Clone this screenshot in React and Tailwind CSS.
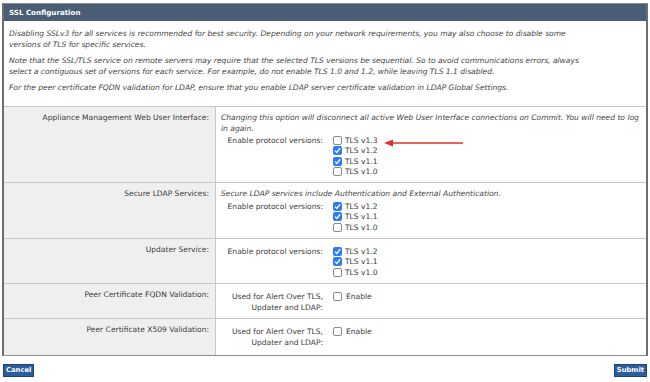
import React from 'react';

function Box({ checked }) {
  return checked ? (
    <span className="inline-flex w-[9px] h-[9px] rounded-[2px] bg-[#2d7cf6] items-center justify-center shrink-0">
      <svg width="7" height="7" viewBox="0 0 10 10">
        <path d="M1.5 5.2 L4 7.8 L8.8 1.8" fill="none" stroke="white" strokeWidth="1.8" />
      </svg>
    </span>
  ) : (
    <span className="inline-block w-[9px] h-[9px] rounded-[2px] border border-[#8a8a8a] bg-white shrink-0" />
  );
}

function Versions({ items }) {
  return (
    <div className="flex flex-col">
      {items.map(([label, on]) => (
        <div key={label} className="flex items-center gap-[3px] h-[10.5px]">
          <Box checked={on} />
          <span>{label}</span>
        </div>
      ))}
    </div>
  );
}

function Row({ label, children, h, last }) {
  return (
    <div className={`grid grid-cols-[212px_1fr] ${last ? '' : 'border-b border-[#c8c8c8]'}`} style={{ height: h }}>
      <div className="bg-[#efefef] border-r border-[#c8c8c8] text-right pr-[6px] pt-[5px] text-[#3a3a3a]">{label}</div>
      <div className="pl-[5px] pt-[5px] text-[#3a3a3a]">{children}</div>
    </div>
  );
}

export default function App() {
  return (
    <div className="w-[650px] h-[382px] bg-white font-['DejaVu_Sans',sans-serif] text-[7.55px] leading-[11px] relative">
      <div className="mx-[2px] mt-[3px] border border-[#8d8d8d] border-x-2 border-x-[#6e6e6e]">
        <div className="bg-[#4a5d76] text-white font-bold text-[7.1px] h-[17px] flex items-center pl-[5px]">SSL Configuration</div>
        <div className="italic text-[#444] pl-[5px] pr-[52px] pt-[7px] pb-[13px] border-b border-[#c8c8c8] flex flex-col gap-[5px]">
          <p>Disabling SSLv3 for all services is recommended for best security. Depending on your network requirements, you may also choose to disable some versions of TLS for specific services.</p>
          <p>Note that the SSL/TLS service on remote servers may require that the selected TLS versions be sequential. So to avoid communications errors, always select a contiguous set of versions for each service. For example, do not enable TLS 1.0 and 1.2, while leaving TLS 1.1 disabled.</p>
          <p>For the peer certificate FQDN validation for LDAP, ensure that you enable LDAP server certificate validation in LDAP Global Settings.</p>
        </div>
        <Row label="Appliance Management Web User Interface:" h={76}>
          <p className="italic text-[#444]">Changing this option will disconnect all active Web User Interface connections on Commit. You will need to log in again.</p>
          <div className="flex gap-[10px] pl-[4px] mt-[1px]">
            <span className="w-[98px] text-right">Enable protocol versions:</span>
            <Versions items={[['TLS v1.3', false], ['TLS v1.2', true], ['TLS v1.1', true], ['TLS v1.0', false]]} />
          </div>
        </Row>
        <Row label="Secure LDAP Services:" h={56}>
          <p className="italic text-[#444]">Secure LDAP services include Authentication and External Authentication.</p>
          <div className="flex gap-[10px] pl-[4px] mt-[2px]">
            <span className="w-[98px] text-right">Enable protocol versions:</span>
            <Versions items={[['TLS v1.2', true], ['TLS v1.1', true], ['TLS v1.0', false]]} />
          </div>
        </Row>
        <Row label="Updater Service:" h={45}>
          <div className="flex gap-[10px] pl-[4px] pt-[2px]">
            <span className="w-[98px] text-right">Enable protocol versions:</span>
            <Versions items={[['TLS v1.2', true], ['TLS v1.1', true], ['TLS v1.0', false]]} />
          </div>
        </Row>
        <Row label="Peer Certificate FQDN Validation:" h={35}>
          <div className="flex gap-[10px] pl-[4px] pt-[2px]">
            <span className="w-[98px] text-right">Used for Alert Over TLS,<br />Updater and LDAP:</span>
            <div className="flex items-center gap-[4px] h-[11px]"><Box /><span>Enable</span></div>
          </div>
        </Row>
        <Row label="Peer Certificate X509 Validation:" h={36} last>
          <div className="flex gap-[10px] pl-[4px] pt-[2px]">
            <span className="w-[98px] text-right">Used for Alert Over TLS,<br />Updater and LDAP:</span>
            <div className="flex items-center gap-[4px] h-[11px]"><Box /><span>Enable</span></div>
          </div>
        </Row>
      </div>
      <div className="flex justify-between px-[3px] mt-[8px]">
        <button className="bg-[#2c5d9c] text-white font-bold text-[6.8px] h-[13px] px-[2px] leading-[11px] border border-[#1d4277]">Cancel</button>
        <button className="bg-[#2c5d9c] text-white font-bold text-[6.8px] h-[13px] px-[2px] leading-[11px] border border-[#1d4277]">Submit</button>
      </div>
      <svg className="absolute left-[383px] top-[135px]" width="82" height="10" viewBox="0 0 82 10">
        <line x1="8" y1="5" x2="80" y2="5" stroke="#e0302a" strokeWidth="1.6" />
        <path d="M1 5 L10 1.5 L10 8.5 Z" fill="#e0302a" />
      </svg>
    </div>
  );
}
